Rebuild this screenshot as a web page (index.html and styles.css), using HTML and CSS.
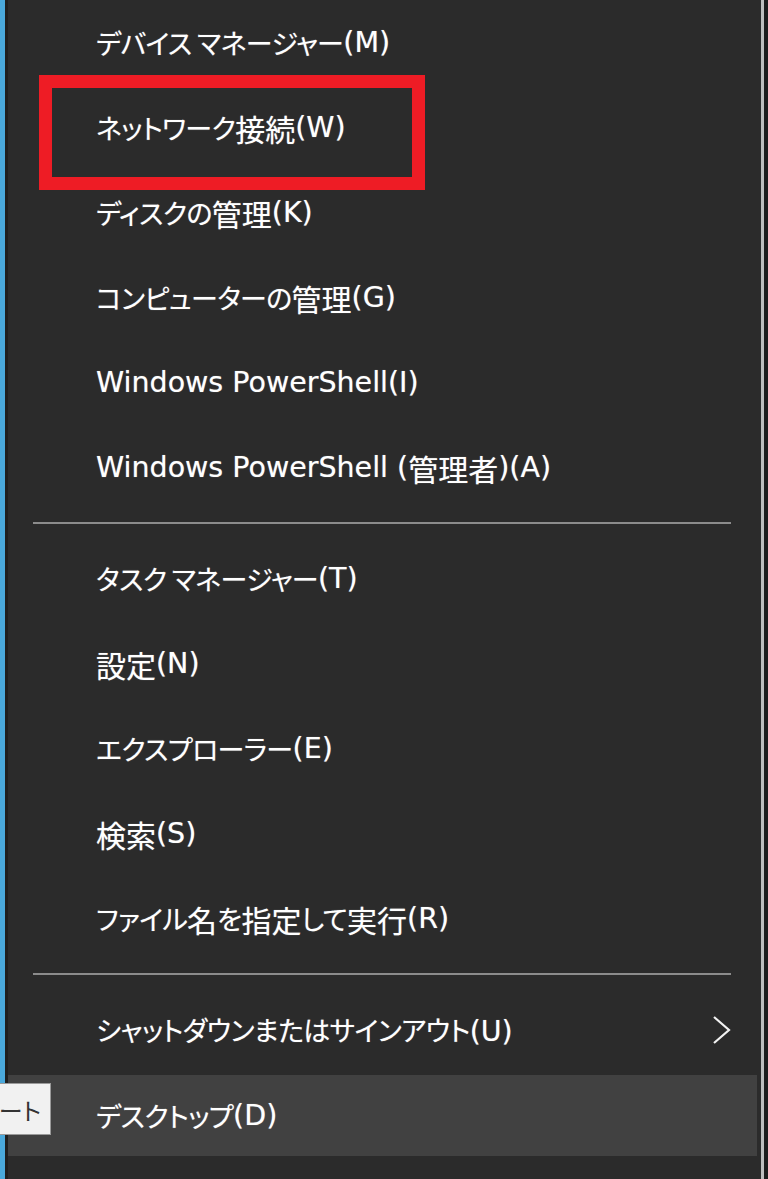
FILE: index.html
```html
<!DOCTYPE html>
<html lang="ja">
<head>
<meta charset="utf-8">
<link rel="stylesheet" href="styles.css">
</head>
<body>
<div class="screen">
  <div class="edge-blue"></div>
  <div class="edge-gap"></div>
  <div class="menu">
    <div class="item">デバイス マネージャー<span class="lat">(M)</span></div>
    <div class="item">ネットワーク<span class="kj">接続</span><span class="lat">(W)</span></div>
    <div class="item">ディスクの<span class="kj">管理</span><span class="lat">(K)</span></div>
    <div class="item">コンピューターの<span class="kj">管理</span><span class="lat">(G)</span></div>
    <div class="item"><span class="lat">Windows PowerShell(I)</span></div>
    <div class="item"><span class="lat">Windows PowerShell (</span><span class="kj">管理者</span><span class="lat">)(A)</span></div>
    <div class="sep"></div>
    <div class="item">タスク マネージャー<span class="lat">(T)</span></div>
    <div class="item"><span class="kj">設定</span><span class="lat">(N)</span></div>
    <div class="item">エクスプローラー<span class="lat">(E)</span></div>
    <div class="item"><span class="kj">検索</span><span class="lat">(S)</span></div>
    <div class="item">ファイル<span class="kj">名</span>を<span class="kj">指定</span>して<span class="kj">実行</span><span class="lat">(R)</span></div>
    <div class="sep"></div>
    <div class="item has-sub">
      <span>シャットダウンまたはサインアウト<span class="lat">(U)</span></span>
      <svg class="chev" width="22" height="30" viewBox="0 0 22 30"><polyline points="3,2 18,15 3,28" fill="none" stroke="#f2f2f2" stroke-width="2.2"/></svg>
    </div>
    <div class="item active">デスクトップ<span class="lat">(D)</span></div>
  </div>
  <div class="edge-right"></div>
  <div class="edge-far"></div>
</div>
<div class="highlight-box"></div>
<div class="tooltip"><span>ート</span></div>
</body>
</html>
```
FILE: styles.css
```css
html, body {
  margin: 0;
  padding: 0;
  background: #1d1d1d;
}
.screen {
  display: flex;
  width: 768px;
  height: 1179px;
  overflow: hidden;
}
.edge-blue {
  width: 5px;
  background: #4aa9dc;
}
.edge-gap {
  width: 3px;
  background: #1f1f1f;
}
.menu {
  flex: 1;
  background: #2b2b2b;
  display: flex;
  flex-direction: column;
  padding-right: 4px;
}
.item {
  height: 85px;
  flex: none;
  display: flex;
  align-items: center;
  padding-left: 88px;
  padding-right: 24px;
  color: #ffffff;
  font-family: "Noto Sans CJK JP", sans-serif;
  font-size: 27px;
  font-feature-settings: "palt";
  letter-spacing: -0.6px;
  white-space: nowrap;
  text-shadow: 0 0 1px rgba(255,255,255,0.5);
}
.lat {
  font-family: "DejaVu Sans", "Noto Sans CJK JP", sans-serif;
  font-size: 28.5px;
  letter-spacing: 0;
}
.kj {
  font-size: 30px;
  letter-spacing: 0;
}
.item.has-sub {
  justify-content: space-between;
}
.item.active {
  background: #414141;
  margin-top: 3px;
  height: 81px;
}
.chev {
  display: block;
}
.sep {
  height: 2px;
  flex: none;
  background: #8c8c8c;
  margin: 12px 26px 12px 25px;
}
.edge-right {
  width: 3px;
  background: #bdbdbd;
}
.edge-far {
  width: 4px;
  background: #1c1c1c;
}
.highlight-box {
  position: absolute;
  left: 39px;
  top: 75px;
  width: 360px;
  height: 89px;
  border: 13px solid #ee1c25;
}
.tooltip {
  position: absolute;
  left: 0;
  top: 1083px;
  width: 51px;
  height: 52px;
  background: #f1f1f1;
  border: 1px solid #9a9a9a;
  border-left: none;
  overflow: hidden;
  display: flex;
  align-items: center;
  justify-content: flex-end;
  padding-right: 9px;
  box-sizing: border-box;
}
.tooltip span {
  font-family: "Noto Sans CJK JP", sans-serif;
  font-size: 24px;
  color: #333;
  white-space: nowrap;
  font-feature-settings: "palt";
}
```
